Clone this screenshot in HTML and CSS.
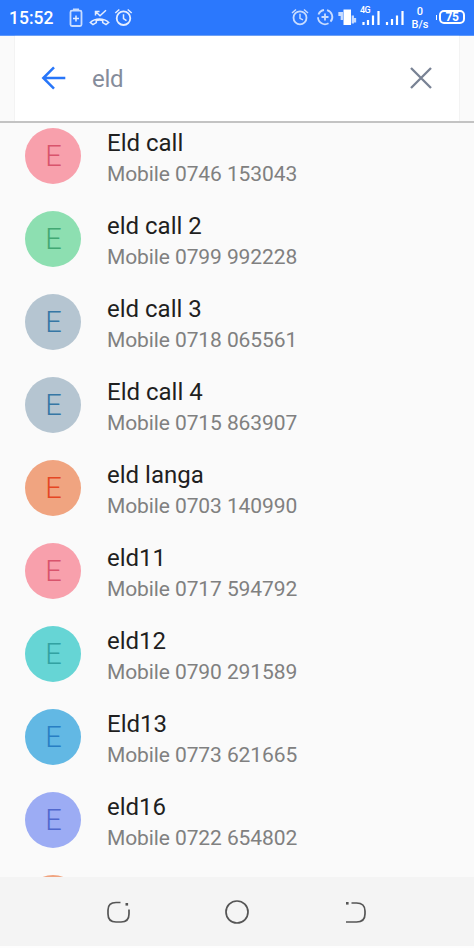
FILE: index.html
```html
<!DOCTYPE html>
<html lang="en">
<head>
    <meta charset="UTF-8">
    <meta name="viewport" content="width=device-width, initial-scale=1.0">
    <title>Contacts</title>
    <link rel="stylesheet" href="styles.css">
</head>
<body>
    <div class="status-bar">
        <span class="time">15:52</span>
        <svg class="status-left" width="66" height="24" viewBox="68 6 66 24" fill="none" stroke="#e4edff" stroke-width="1.5">
            <!-- battery saver -->
            <path d="M73 10.500h6v-2h-6z" fill="#c8dcff" stroke="none"/>
            <rect x="70.500" y="10.700" width="11" height="15.300" rx="1.500" stroke="#c8dcff" stroke-width="1.800"/>
            <path d="M76 15.500v6M73 18.500h6"/>
            <!-- missed call -->
            <path d="M95.500 15.500v-4h4M95.800 11.800l4.200 4 6-5.500"/>
            <path d="M90.300 22.500c5-4.700 13.400-4.700 18.400 0l-2.700 2.200-3.300-2v-2.200c-2-.6-4.400-.6-6.400 0v2.200l-3.300 2z"/>
            <!-- alarm -->
            <circle cx="123.500" cy="18.200" r="6.800" stroke-width="1.800"/>
            <path d="M123.500 14.200v4.500l3 2M115.300 13l4-3.500M131.700 13l-4-3.500"/>
        </svg>
        <svg class="status-right" width="116" height="24" viewBox="290 6 116 24" fill="none" stroke="#c8dcff" stroke-width="1.500">
            <circle cx="300" cy="17.800" r="6.500" stroke-width="1.800"/>
            <path d="M300 13.800v4.500l3 1.500M292 13l4-3.500M308 13l-4-3.500"/>
            <!-- data saver -->
            <path d="M327 10.200a7 7 0 0 1 3.500 11.500M328.500 23.300a7 7 0 0 1-10.500-6M318.500 14.500a7 7 0 0 1 5.500-4.500" stroke-width="1.800"/>
            <path d="M325 13.500v7M321.500 17h7" stroke-width="1.800"/>
            <!-- vibrate -->
            <path d="M343.500 9.500h7.500v15.500h-7.500z" fill="#fff" stroke="none"/>
            <path d="M341.800 12v8M339.500 12v4M352.800 15.500v8M355 18v4.500" stroke-width="2.300"/>
            <!-- signal -->
            <path d="M363.500 22v3M368 20v5M373 15.500v9.500M378.500 11v14" stroke="#fff" stroke-width="2.200"/>
            <path d="M387 22v3M392 19v6M397 15.500v9.500M402.500 11v14" stroke="#fff" stroke-width="2.200"/>
        </svg>
        <span class="network">4G</span>
        <div class="speed">
            <span>0</span>
            <span>B/s</span>
        </div>
        <span class="battery">75</span>
    </div>

    <div class="search">
        <svg width="26" height="26" viewBox="0 0 26 26" fill="none" stroke="#2876f9" stroke-width="2.500">
            <path d="M25.300 13H3.500M14 2.300L3.300 13 14 23.700"/>
        </svg>
        <span class="query">eld</span>
        <svg width="24" height="24" viewBox="0 0 24 24" fill="none" stroke="#788294" stroke-width="2.300">
            <path d="M2 2l20 20M22 2L2 22"/>
        </svg>
    </div>

    <div class="contacts">
        <div class="contact">
            <div class="avatar pink">E</div>
            <div class="info">
                <div class="name">Eld call</div>
                <div class="number">Mobile 0746 153043</div>
            </div>
        </div>
        <div class="contact">
            <div class="avatar green">E</div>
            <div class="info">
                <div class="name">eld call 2</div>
                <div class="number">Mobile 0799 992228</div>
            </div>
        </div>
        <div class="contact">
            <div class="avatar gray">E</div>
            <div class="info">
                <div class="name">eld call 3</div>
                <div class="number">Mobile 0718 065561</div>
            </div>
        </div>
        <div class="contact">
            <div class="avatar gray">E</div>
            <div class="info">
                <div class="name">Eld call 4</div>
                <div class="number">Mobile 0715 863907</div>
            </div>
        </div>
        <div class="contact">
            <div class="avatar orange">E</div>
            <div class="info">
                <div class="name">eld langa</div>
                <div class="number">Mobile 0703 140990</div>
            </div>
        </div>
        <div class="contact">
            <div class="avatar pink">E</div>
            <div class="info">
                <div class="name">eld11</div>
                <div class="number">Mobile 0717 594792</div>
            </div>
        </div>
        <div class="contact">
            <div class="avatar teal">E</div>
            <div class="info">
                <div class="name">eld12</div>
                <div class="number">Mobile 0790 291589</div>
            </div>
        </div>
        <div class="contact">
            <div class="avatar blue">E</div>
            <div class="info">
                <div class="name">Eld13</div>
                <div class="number">Mobile 0773 621665</div>
            </div>
        </div>
        <div class="contact">
            <div class="avatar purple">E</div>
            <div class="info">
                <div class="name">eld16</div>
                <div class="number">Mobile 0722 654802</div>
            </div>
        </div>
        <div class="contact">
            <div class="avatar orange"></div>
        </div>
    </div>

    <div class="nav-bar">
        <svg width="24" height="24" viewBox="0 0 24 24" fill="none" stroke="#555" stroke-width="1.700">
            <path d="M14.500 2.500H10Q2 2.500 2 10v4q0 8 8 8h5q8 0 8-8V9.500"/>
            <path d="M19.500 3h2.600v2.600h-2.600z" fill="#555" stroke="none"/>
        </svg>
        <svg width="24" height="24" viewBox="0 0 24 24" fill="none" stroke="#555" stroke-width="1.700">
            <circle cx="12" cy="12" r="11"/>
        </svg>
        <svg width="24" height="24" viewBox="0 0 24 24" fill="none" stroke="#555" stroke-width="1.700">
            <path d="M8.500 3h5q8.500 0 8.500 8v3q0 8-8.500 8H3"/>
            <path d="M3 2h2.600v2.600H3z" fill="#555" stroke="none"/>
        </svg>
    </div>
</body>
</html>
```
FILE: styles.css
```css
* {
    box-sizing: border-box;
}
body {
    margin: 0;
    width: 474px;
    height: 948px;
    display: flex;
    flex-direction: column;
    overflow: hidden;
    background-color: #fafafa;
    border-bottom: 2px solid #fdfdfd;
    font-family: Roboto, sans-serif;
}
.status-bar {
    position: relative;
    display: flex;
    align-items: center;
    flex-shrink: 0;
    height: 36px;
    padding-left: 9px;
    background-color: #2b78fd;
    border-bottom: 1px solid #5b97fc;
    color: white;
}
.time {
    width: 59px;
    padding-top: 1px;
    font-size: 17.5px;
    font-weight: 500;
}
.status-right {
    margin-left: 156px;
}
.network {
    position: absolute;
    left: 360px;
    top: 5px;
    font-size: 9px;
    line-height: 10px;
    font-weight: 500;
    letter-spacing: -0.5px;
}
.speed {
    display: flex;
    flex-direction: column;
    width: 24px;
    margin-left: 2px;
    font-size: 11px;
    line-height: 13px;
    font-weight: 500;
    text-align: center;
}
.battery {
    position: relative;
    width: 26px;
    height: 14px;
    margin: 0 0 1px 7px;
    border: 2px solid white;
    border-radius: 5px;
    font-size: 12px;
    line-height: 11px;
    font-weight: 700;
    text-align: center;
    letter-spacing: -0.3px;
}
.battery::before {
    content: "";
    position: absolute;
    left: -5px;
    top: 3px;
    width: 1px;
    height: 5px;
    background-color: white;
}
.search {
    position: relative;
    display: flex;
    align-items: center;
    flex-shrink: 0;
    height: 85px;
    margin: 0 15px;
    padding: 0 26px 0 25px;
    background-color: white;
    box-shadow: 0 0 1px #ccc;
}
.search svg {
    margin-bottom: 1px;
}
.search::after {
    content: "";
    position: absolute;
    left: -15px;
    right: -15px;
    bottom: -2px;
    height: 2px;
    background-color: #c3c3c3;
}
.query {
    flex: 1;
    margin-left: 26px;
    font-size: 24px;
    letter-spacing: -0.3px;
    color: #858c9b;
}
.contacts {
    flex: 1;
    min-height: 0;
    overflow: hidden;
    padding: 7px 0 0 25px;
}
.contact {
    display: flex;
    height: 83px;
}
.avatar {
    width: 56px;
    height: 56px;
    padding-left: 1px;
    border-radius: 50%;
    font-size: 29px;
    font-weight: 300;
    line-height: 57px;
    text-align: center;
}
.info {
    margin-left: 26px;
}
.name {
    font-size: 24px;
    line-height: 30px;
    color: #1f1f1f;
}
.number {
    font-size: 21px;
    line-height: 32px;
    letter-spacing: -0.1px;
    color: #808080;
}
.pink {
    background-color: #f8a0ac;
    color: #d9546c;
}
.green {
    background-color: #8ddfb1;
    color: #42a873;
}
.gray {
    background-color: #b5c5d1;
    color: #3677a5;
}
.orange {
    background-color: #f0a480;
    color: #e54724;
}
.teal {
    background-color: #66d5d5;
    color: #32a2a2;
}
.blue {
    background-color: #62b8e4;
    color: #287fc4;
}
.purple {
    background-color: #9cacf4;
    color: #5068ce;
}
.nav-bar {
    display: flex;
    justify-content: space-between;
    align-items: center;
    flex-shrink: 0;
    height: 69px;
    padding: 0 107px 0 106px;
    background-color: #f4f4f4;
}
```
